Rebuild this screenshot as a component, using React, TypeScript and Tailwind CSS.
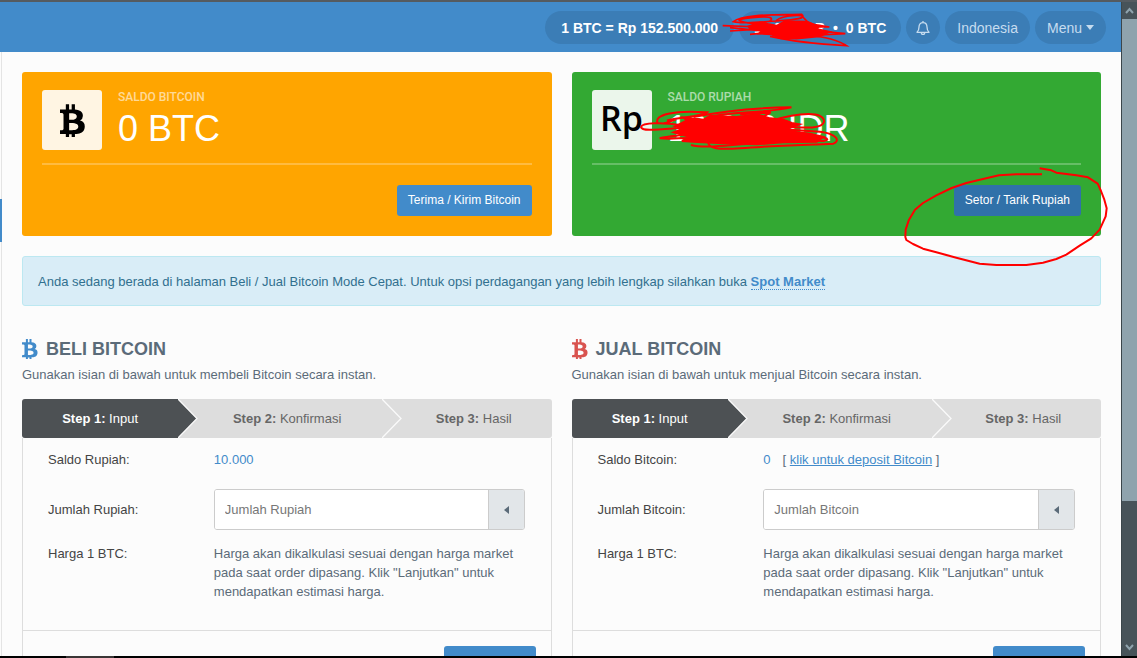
import React from 'react'

const orderForms = [
  {
    id: 'beli',
    title: 'BELI BITCOIN',
    desc: 'Gunakan isian di bawah untuk membeli Bitcoin secara instan.',
    iconColor: 'text-[#428bca]',
    saldoLabel: 'Saldo Rupiah:',
    saldo: '10.000',
    deposit: false,
    jumlah: 'Jumlah Rupiah',
  },
  {
    id: 'jual',
    title: 'JUAL BITCOIN',
    desc: 'Gunakan isian di bawah untuk menjual Bitcoin secara instan.',
    iconColor: 'text-[#d9534f]',
    saldoLabel: 'Saldo Bitcoin:',
    saldo: '0',
    deposit: true,
    jumlah: 'Jumlah Bitcoin',
  },
]

function BitcoinIcon({ className }: { className: string }) {
  return (
    <svg viewBox="90 128 1180 1536" className={className} fill="currentColor" aria-hidden="true">
      <path d="M1167 640q18 182-131 258 117 28 175 103t45 214q-7 71-32.5 125t-64.5 89-97 58.5-121.5 34.5-145.5 15v255h-154v-251q-80 0-122-1v252h-154v-255q-18 0-54-.5t-55-.5h-200l31-183h111q50 0 58-51v-402h16q-6-1-16-1v-287q-13-68-89-68h-111v-164l212 1q64 0 97-1v-252h154v247q82-2 122-2v-245h154v252q79 7 140 22.5t113 45 82.5 78 36.5 114.5zm-215 545q0-36-15-64t-37-46-57.5-30.5-65.5-18.5-74-9-69-3-64.5 1-47.5 1v338q8 0 37 .5t48 .5 53-1.5 58.5-4 57-8.5 55.5-14 47.5-21 39.5-30 24.5-40 9.5-51zm-71-476q0-33-12.5-58.5t-30.5-42-48-28-55-16.5-61.5-8-58-2.5-54 1-39.5.5v307q5 0 34.5.5t46.5 0 50-2 55-5.5 51.5-11 48.5-18.5 37-27 27-38.5 9-51z" />
    </svg>
  )
}

function BellIcon() {
  return (
    <svg viewBox="0 0 14 14" className="h-3.5 w-3.5" fill="none" stroke="currentColor" aria-hidden="true">
      <path d="M7 0v1.5M1 11.3c1.6-1.3 2-3 2-5.2C3 3.2 4.8 1.6 7 1.6s4 1.600 4 4.500c0 2.200.4 3.900 2 5.200z" strokeWidth="1.3" strokeLinejoin="round" />
      <path d="M5.300 11.800a1.700 1.700 0 0 0 3.400 0" strokeWidth="1.3" />
    </svg>
  )
}

// Chevron between two steps
function StepArrow({ fill }: { fill: string }) {
  return (
    <svg viewBox="0 0 20 39" className="h-[39px] w-5 shrink-0" aria-hidden="true">
      <path d="M0 0l19 19.500L0 39z" fill={fill} />
      <path d="M0 0l19 19.500L0 39" fill="none" stroke="#fafafa" strokeWidth="1.3" />
    </svg>
  )
}

function HeaderScribble() {
  return (
    <svg viewBox="570 33 390 120" className="pointer-events-none absolute -top-px right-[51px] h-10 w-[130px]" fill="none" stroke="#f00" strokeWidth="5" aria-hidden="true">
      <path d="M655 82L690 70 740 80 765 66 830 68 866 82 862 90 900 98 868 112 800 119 752 118 722 106 686 104 700 92 660 90z" fill="#f00" />
      <path d="M578 80L700 84M600 96L700 90M600 86L720 98M610 68C640 44 740 48 815 46C830 58 800 62 740 66C680 70 640 76 610 68zM625 62C690 50 740 50 720 66C690 78 640 74 625 62M735 70C745 50 800 48 815 50L832 68L850 76L898 84L850 84M660 106L740 98M870 96L946 104L870 108M720 112C790 128 880 136 950 140C920 120 870 112 830 108" />
    </svg>
  )
}

function BalanceScribble() {
  return (
    <svg viewBox="200 130 610 150" className="pointer-events-none absolute left-[65px] top-[31px] h-[50px] w-[203px]" fill="none" stroke="#f00" strokeWidth="6" aria-hidden="true">
      <path d="M315 200L350 182 340 174 400 180 420 168 500 172 560 164 600 176 640 180 665 190 688 194 655 206 670 216 720 222 760 232 740 246 640 248 560 254 440 250 370 246 335 244 360 232 310 218 340 206z" fill="#f00" />
      <path d="M330 196C280 188 215 188 212 202C214 216 260 210 340 204M262 190C250 166 310 150 410 158C390 172 330 172 290 182M320 178L280 192M370 172C430 160 540 144 664 143C600 160 470 156 420 172M510 164L602 158L570 176M600 184C690 158 762 154 762 186C758 210 700 204 640 200M268 236C300 226 330 230 360 222M268 236C320 240 330 232 400 236M362 256C400 266 470 258 540 252M414 240C408 270 450 270 510 266C600 258 700 256 790 252C812 244 800 222 750 216L660 210M700 226C760 230 790 238 760 244L640 240" />
    </svg>
  )
}

function ButtonCircle() {
  return (
    <svg viewBox="100 40 621 321" className="pointer-events-none absolute -right-[29px] -top-[22px] h-[107px] w-[207px]" fill="none" stroke="#f00" strokeWidth="6" strokeLinejoin="round" aria-hidden="true">
      <path d="M517 74H440L388 77L340 88L290 100L246 115L200 137L160 160L136 180L118 210L108 240L107 262L110 271L130 283L160 297L200 308L260 324L330 342L380 346L470 346L520 339L560 328L590 315L630 288L665 266L690 240L708 200L711 176L704 150L694 124L684 102L655 83L620 77L560 69L545 62L510 56" />
    </svg>
  )
}

function OrderForm({ form }: { form: (typeof orderForms)[number] }) {
  return (
    <section>
      <h2 className="flex items-center gap-2 text-lg leading-6 font-bold text-[#5b6b79]">
        <BitcoinIcon className={`h-5 w-4 ${form.iconColor}`} />
        {form.title}
      </h2>
      <p className="mt-1 leading-5">{form.desc}</p>

      <ol className="mt-3.5 flex h-[39px] overflow-hidden rounded-[3px] bg-[#ddd] text-[#666]">
        <li className="flex w-[29.5%] items-center justify-center bg-[#4d5154] text-white">
          <span><b>Step 1:</b> Input</span>
        </li>
        <li className="flex w-[38.5%] items-center">
          <StepArrow fill="#4d5154" />
          <span className="flex-1 pr-1.5 text-center"><b>Step 2:</b> Konfirmasi</span>
        </li>
        <li className="flex flex-1 items-center">
          <StepArrow fill="#ddd" />
          <span className="flex-1 pr-1.5 text-center"><b>Step 3:</b> Hasil</span>
        </li>
      </ol>

      <form className="border-x border-[#ddd]">
        <div className="border-b border-[#ddd] px-[15px] pt-3 pb-[29px]">
          <div className="flex">
            <span className="w-1/3 px-2.5 leading-5 text-[#444]">{form.saldoLabel}</span>
            <span className="w-2/3 px-2.5 leading-5">
              <span className="text-[#428bca]">{form.saldo}</span>
              {form.deposit && (
                <span className="ml-3">
                  [ <a href="#deposit" className="text-[#428bca] underline">klik untuk deposit Bitcoin</a> ]
                </span>
              )}
            </span>
          </div>

          <div className="mt-[19px] flex items-center">
            <label htmlFor={form.id} className="w-1/3 px-2.5 text-[#444]">{form.jumlah}:</label>
            <div className="w-2/3 px-2.5">
              <div className="flex h-[41px] overflow-hidden rounded-[3px] border border-[#ccc]">
                <input
                  id={form.id}
                  type="text"
                  placeholder={form.jumlah}
                  className="min-w-0 flex-1 bg-white px-2.5 outline-none placeholder:text-[#777]"
                />
                <button type="button" aria-label="Isi maksimum" className="flex w-9 items-center justify-center border-l border-[#ccc] bg-[#e2e6e9] text-[#5b6b79]">
                  <svg viewBox="0 0 5 8" className="h-2 w-[5px]" fill="currentColor">
                    <path d="M5 0v8L0 4z" />
                  </svg>
                </button>
              </div>
            </div>
          </div>

          <div className="mt-3.5 flex leading-[19px]">
            <span className="w-1/3 px-2.5 text-[#444]">Harga 1 BTC:</span>
            <p className="w-2/3 px-2.5">
              Harga akan dikalkulasi sesuai dengan harga market pada saat order dipasang. Klik "Lanjutkan" untuk mendapatkan estimasi harga.
            </p>
          </div>
        </div>
        <div className="flex justify-end p-[15px]">
          <button type="submit" aria-label="Lanjutkan" className="h-9 w-[92px] rounded-[3px] bg-[#428bca]"></button>
        </div>
      </form>
    </section>
  )
}

export default function App() {
  return (
    <div className="flex h-screen flex-col overflow-hidden bg-[#fcfcfc] font-['Liberation_Sans',Arial,sans-serif] text-[13px] text-[#5b6b79]">
      <div className="h-[2px] shrink-0 bg-[#555b60]"></div>

      <div className="flex min-h-0 flex-1">
        {/* Collapsed sidebar */}
        <nav className="flex w-[2px] shrink-0 flex-col">
          <div className="h-[50px] bg-[#428bca]"></div>
          <div className="h-[147px] border-r border-[#e4e4e4]"></div>
          <div className="h-[43px] bg-[#428bca]"></div>
          <div className="flex-1 border-r border-[#e4e4e4]"></div>
        </nav>

        <main className="min-w-0 flex-1 overflow-hidden">
          <header className="flex h-[50px] items-center justify-end gap-[5px] bg-[#428bca] pt-[1px] pr-[15px] text-sm text-[#c6dcef]">
            <span className="flex h-[33px] items-center rounded-full bg-[#3b7db6] px-4 font-bold text-white">
              1 BTC = Rp 152.500.000
            </span>
            <span className="relative flex h-[33px] items-center gap-2 rounded-full bg-[#3b7db6] px-[15px] font-bold text-white">
              <span>10.000 IDR</span>
              <span>•</span>
              <span>0 BTC</span>
              <HeaderScribble />
            </span>
            <button aria-label="Notifikasi" className="flex h-[33px] w-[34px] items-center justify-center rounded-full bg-[#3b7db6]">
              <BellIcon />
            </button>
            <button className="h-[33px] rounded-full bg-[#3b7db6] px-3">Indonesia</button>
            <button className="flex h-[33px] items-center gap-1 rounded-full bg-[#3b7db6] px-3">
              Menu
              <svg viewBox="0 0 8 5" className="h-[5px] w-2" fill="currentColor">
                <path d="M0 0h8L4 5z" />
              </svg>
            </button>
          </header>

          <div className="p-5">
            <div className="grid grid-cols-2 gap-5">
              <div className="rounded-[3px] bg-[#ffa500] px-5 pt-[18px] pb-5">
                <div className="flex gap-4 border-b-2 border-white/25 pb-[13px]">
                  <div className="flex h-[60px] w-[60px] items-center justify-center rounded-[3px] bg-[#fff5e3] text-black">
                    <BitcoinIcon className="h-[33px] w-[25px]" />
                  </div>
                  <div>
                    <p className="font-[Roboto,sans-serif] text-xs leading-[14px] font-medium text-white/60">SALDO BITCOIN</p>
                    <p className="mt-[5px] text-4xl leading-10 text-white">0 BTC</p>
                  </div>
                </div>
                <div className="mt-5 flex justify-end">
                  <button className="h-[31px] rounded-[3px] bg-[#428bca] px-[11px] pb-0.5 text-xs text-white">Terima / Kirim Bitcoin</button>
                </div>
              </div>

              <div className="relative rounded-[3px] bg-[#33a933] px-5 pt-[18px] pb-5">
                <div className="flex gap-4 border-b-2 border-white/25 pb-[13px]">
                  <div className="flex h-[60px] w-[60px] items-center justify-center rounded-[3px] bg-[#ebf6eb] pb-1 font-['Open_Sans',sans-serif] text-[34px] font-semibold text-black">
                    Rp
                  </div>
                  <div>
                    <p className="font-[Roboto,sans-serif] text-xs leading-[14px] font-medium text-white/60">SALDO RUPIAH</p>
                    <p className="mt-[5px] text-4xl leading-10 text-white">10.000 IDR</p>
                  </div>
                </div>
                <BalanceScribble />
                <div className="mt-5 flex justify-end">
                  <div className="relative">
                    <button className="h-[31px] rounded-[3px] bg-[#3071a9] px-[11px] pb-0.5 text-xs text-white">Setor / Tarik Rupiah</button>
                    <ButtonCircle />
                  </div>
                </div>
              </div>
            </div>

            <div className="mt-5 rounded-[3px] border border-[#bce8f1] bg-[#d9edf7] px-[15px] pt-4 pb-3.5 leading-[18px] text-[#31708f]">
              Anda sedang berada di halaman Beli / Jual Bitcoin Mode Cepat. Untuk opsi perdagangan yang lebih lengkap silahkan buka{' '}
              <a href="#spot" className="border-b border-dotted border-[#428bca] font-bold text-[#428bca]">Spot Market</a>
            </div>

            <div className="mt-[31px] grid grid-cols-2 gap-5">
              {orderForms.map(form => (
                <OrderForm key={form.id} form={form} />
              ))}
            </div>
          </div>
        </main>

        {/* Scrollbar */}
        <div className="flex w-4 shrink-0 flex-col items-center border-l border-[#3b464b] bg-[#475359] text-[#8fa3ad]">
          <svg viewBox="0 0 15 17" className="h-[17px] w-[15px] shrink-0" fill="none" stroke="currentColor" strokeWidth="2">
            <path d="M4 11l3.500-4L11 11" />
          </svg>
          <div className="h-[482px] w-full bg-[#8fa3ad]"></div>
          <div className="flex-1"></div>
          <svg viewBox="0 0 15 17" className="h-[17px] w-[15px] shrink-0" fill="none" stroke="currentColor" strokeWidth="2">
            <path d="M4 6l3.500 4L11 6" />
          </svg>
        </div>
      </div>

      <div className="h-[2px] shrink-0 bg-black pl-[66px]">
        <div className="h-full w-12 bg-[#3a3636]"></div>
      </div>
    </div>
  )
}
